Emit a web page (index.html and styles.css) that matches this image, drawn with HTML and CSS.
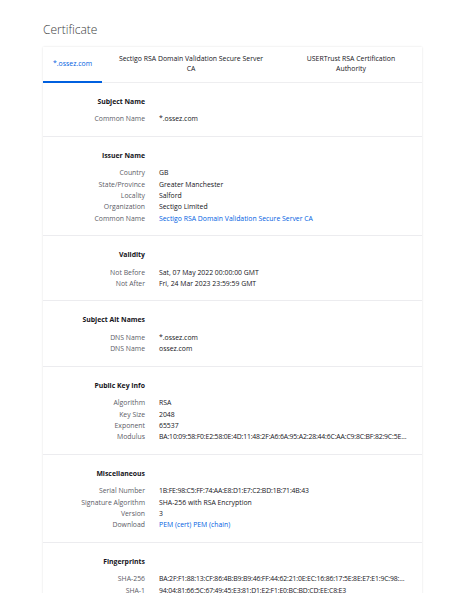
FILE: index.html
```html
<!DOCTYPE html>
<html lang="en">
<head>
<meta charset="utf-8">
<title>Certificate</title>
<link rel="stylesheet" href="styles.css">
</head>
<body>
<main class="page">
  <h1 class="title">Certificate</h1>
  <section class="card">
    <nav class="tabs">
      <div class="tab active">*.ossez.com</div>
      <div class="tab">Sectigo RSA Domain Validation Secure Server CA</div>
      <div class="tab">USERTrust RSA Certification Authority</div>
    </nav>

    <div class="group">
      <div class="heading">Subject Name</div>
      <div class="rows">
        <div class="label">Common Name</div><div class="value">*.ossez.com</div>
      </div>
    </div>

    <div class="group">
      <div class="heading">Issuer Name</div>
      <div class="rows">
        <div class="label">Country</div><div class="value">GB</div>
        <div class="label">State/Province</div><div class="value">Greater Manchester</div>
        <div class="label">Locality</div><div class="value">Salford</div>
        <div class="label">Organization</div><div class="value">Sectigo Limited</div>
        <div class="label">Common Name</div><div class="value"><a class="link" href="#">Sectigo RSA Domain Validation Secure Server CA</a></div>
      </div>
    </div>

    <div class="group">
      <div class="heading">Validity</div>
      <div class="rows">
        <div class="label">Not Before</div><div class="value">Sat, 07 May 2022 00:00:00 GMT</div>
        <div class="label">Not After</div><div class="value">Fri, 24 Mar 2023 23:59:59 GMT</div>
      </div>
    </div>

    <div class="group">
      <div class="heading">Subject Alt Names</div>
      <div class="rows">
        <div class="label">DNS Name</div><div class="value">*.ossez.com</div>
        <div class="label">DNS Name</div><div class="value">ossez.com</div>
      </div>
    </div>

    <div class="group">
      <div class="heading">Public Key Info</div>
      <div class="rows">
        <div class="label">Algorithm</div><div class="value">RSA</div>
        <div class="label">Key Size</div><div class="value">2048</div>
        <div class="label">Exponent</div><div class="value">65537</div>
        <div class="label">Modulus</div><div class="value hex trunc">BA:10:09:58:F0:E2:58:0E:4D:11:48:2F:A6:6A:95:A2:28:44:6C:AA:C9:8C:BF:82:9C:5E:1D:77:0A:3C:92:B4:6E:D1</div>
      </div>
    </div>

    <div class="group">
      <div class="heading">Miscellaneous</div>
      <div class="rows">
        <div class="label">Serial Number</div><div class="value hex">1B:FE:98:C5:FF:74:AA:E8:D1:E7:C2:BD:1B:71:4B:43</div>
        <div class="label">Signature Algorithm</div><div class="value">SHA-256 with RSA Encryption</div>
        <div class="label">Version</div><div class="value">3</div>
        <div class="label">Download</div><div class="value"><a class="link" href="#">PEM (cert)</a> <a class="link" href="#">PEM (chain)</a></div>
      </div>
    </div>

    <div class="group">
      <div class="heading">Fingerprints</div>
      <div class="rows">
        <div class="label">SHA-256</div><div class="value hex trunc">BA:2F:F1:88:13:CF:86:4B:B9:B9:46:FF:44:62:21:0E:EC:16:86:17:5E:8E:E7:E1:9C:98:8A:3D:52:11:F0:7C</div>
        <div class="label">SHA-1</div><div class="value hex">94:04:81:66:5C:67:49:45:E3:81:D1:E2:F1:E0:BC:BD:CD:EE:C8:E3</div>
      </div>
    </div>
  </section>
</main>
</body>
</html>
```

FILE: styles.css
```css
html, body {
  margin: 0;
  padding: 0;
  background: #ffffff;
}

body {
  font-family: "Open Sans", "Noto Sans", sans-serif;
  color: #15141a;
}

.page {
  padding: 22px 52px 0 43px;
}

.title {
  margin: 0 0 9px 0;
  font-size: 12px;
  line-height: 16px;
  font-weight: 300;
  color: #3b3b3b;
}

.card {
  background: #fff;
  box-shadow: 0 0 2px rgba(0, 0, 0, 0.12);
}

.tabs {
  display: grid;
  grid-template-columns: 59px 178px 1fr;
  height: 35px;
  border-bottom: 1px solid #eeeef0;
}

.tab {
  display: flex;
  align-items: center;
  justify-content: center;
  text-align: center;
  padding: 0 12px;
  font-size: 6.9px;
  line-height: 10px;
  color: #15141a;
  border-bottom: 2px solid transparent;
  margin-bottom: -1px;
}

.tab.active {
  color: #0060df;
  border-bottom-color: #0060df;
  padding: 0 6px;
}

.group {
  padding: 13px 14px 11px 0;
  border-top: 1px solid #ececef;
  font-size: 6.87px;
  line-height: 11.4px;
}

.tabs + .group {
  border-top: none;
}

.rows {
  display: grid;
  grid-template-columns: 102px minmax(0, 1fr);
  column-gap: 14px;
}

.heading {
  width: 102px;
  text-align: right;
  font-weight: 700;
  margin-bottom: 6px;
}

.label {
  text-align: right;
  color: #5b5b66;
  white-space: nowrap;
}

.value {
  color: #15141a;
  white-space: nowrap;
}

.hex {
  letter-spacing: -0.15px;
}

.trunc {
  overflow: hidden;
  text-overflow: ellipsis;
}

.link {
  color: #0060df;
  text-decoration: none;
}
```
